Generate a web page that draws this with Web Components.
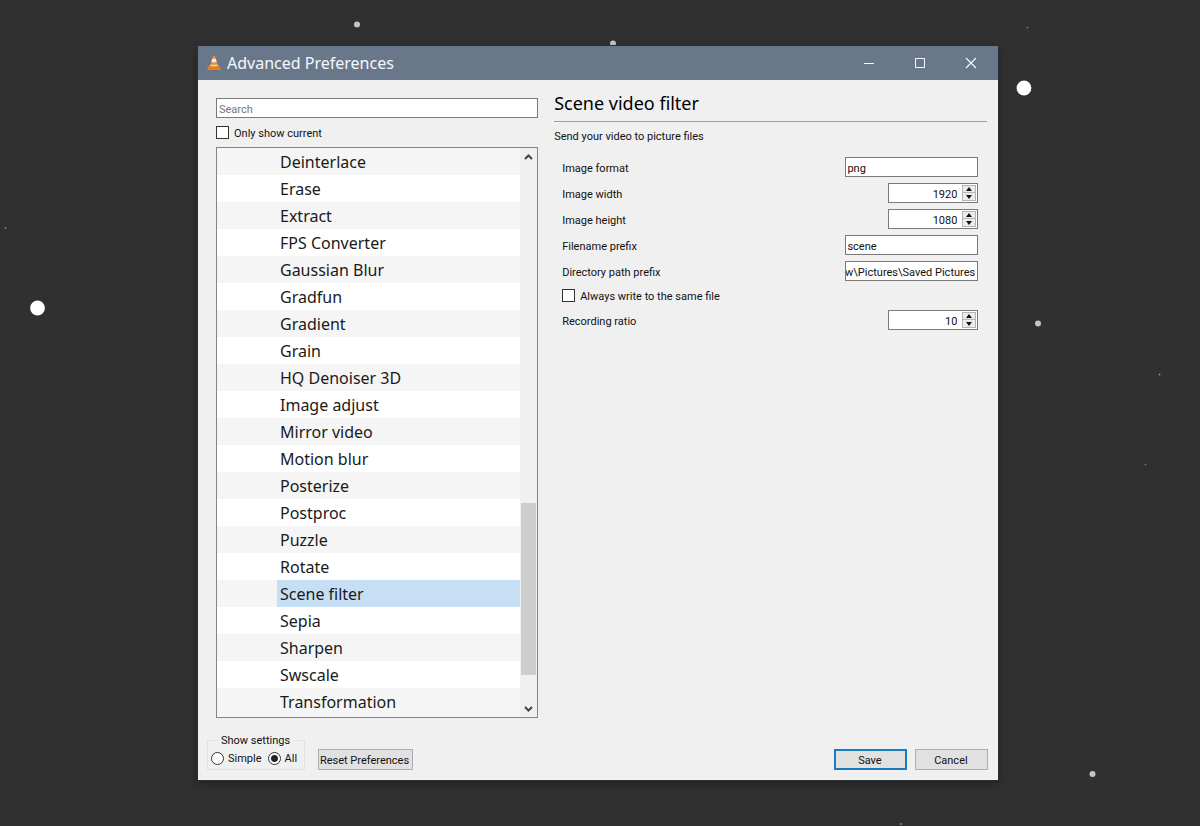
<!DOCTYPE html>
<html lang="en">
<head>
<meta charset="utf-8">
<meta name="viewport" content="width=device-width, initial-scale=1">
<title>Advanced Preferences</title>
<style>
  body { margin: 0; background: #303030; font-family: "Noto Sans", "Open Sans", sans-serif; --small: 11px Roboto, sans-serif; }
</style>
</head>
<body>
<preferences-desktop>
  <app-window heading="Advanced Preferences">
    <module-browser slot="sidebar"></module-browser>
    <settings-panel slot="content" heading="Scene video filter" summary="Send your video to picture files">
      <text-setting label="Image format" value="png"></text-setting>
      <number-setting label="Image width" value="1920"></number-setting>
      <number-setting label="Image height" value="1080"></number-setting>
      <text-setting label="Filename prefix" value="scene"></text-setting>
      <text-setting label="Directory path prefix" value="iw\Pictures\Saved Pictures" align="end"></text-setting>
      <check-box label="Always write to the same file"></check-box>
      <number-setting label="Recording ratio" value="10"></number-setting>
    </settings-panel>
    <dialog-footer slot="footer"></dialog-footer>
  </app-window>
</preferences-desktop>

<script>
const define = (name, render) => {
  customElements.define(name, class extends HTMLElement {
    constructor() {
      super();
      this.attachShadow({ mode: "open" });
    }
    connectedCallback() {
      const template = document.createElement("template");
      template.innerHTML = "<style>*{box-sizing:border-box}</style>" + render(this);
      this.shadowRoot.replaceChildren(template.content.cloneNode(true));
    }
  });
};
const attr = (el, name) => el.getAttribute(name) || "";

/* Dark desktop with scattered snow behind the dialog. */
define("preferences-desktop", () => `
  <style>
    :host { display: block; position: relative; box-sizing: border-box; min-height: 100vh; padding: 46px 0; overflow: hidden; }
    .sky { position: absolute; inset: 0; width: 100%; height: 100%; }
    ::slotted(app-window) { margin: 0 16.8% 0 16.5%; }
  </style>
  <svg class="sky" viewBox="0 0 1200 826" preserveAspectRatio="xMidYMid slice" aria-hidden="true">
    <g fill="#fff"><circle cx="1024" cy="88" r="7.4"/><circle cx="37.500" cy="308" r="7.4"/></g>
    <g fill="#c4c4c4"><circle cx="357" cy="24.500" r="3"/><circle cx="613" cy="43.500" r="3"/><circle cx="1038" cy="323.500" r="3"/><circle cx="1092.500" cy="774" r="3"/></g>
    <g fill="#8a8a8a"><circle cx="1027.500" cy="27.500" r=".8"/><circle cx="5.500" cy="228" r=".9"/><circle cx="1159.500" cy="374.500" r=".9"/><circle cx="1145.500" cy="464.500" r=".8"/><circle cx="901" cy="824" r="1"/></g>
  </svg>
  <slot></slot>`);

define("app-window", el => `
  <style>
    :host { display: block; position: relative; background: #f0f0f0; box-shadow: 0 0 0 1px #2b3036, 0 3px 8px rgba(0,0,0,.4); }
    header { display: flex; align-items: center; height: 34px; padding: 0 2px 0 9px; background: #68788a; color: #f4f8fc; }
    h1 { flex: 1; margin: 0 0 0 6px; font-size: 16px; line-height: 24px; font-weight: 400; }
    header button { display: grid; place-items: center; width: 51px; height: 34px; padding: 0; border: 0; background: none; color: inherit; }
    header svg { display: block; }
    main { display: grid; grid-template-columns: minmax(0, 322fr) minmax(0, 433fr); gap: 16px; padding: 11px 11px 0 18px; }
  </style>
  <header>
    <svg width="14" height="16" viewBox="0 0 14 16" aria-hidden="true">
      <path d="M2 10h10l2 5H0z" fill="#e8820c"/>
      <path d="M6 1h2l3 10.500q-4 2-8 0z" fill="#e98c35"/>
      <path d="M5.200 3.800h3.600l.9 3q-2.700 1.200-5.400 0z" fill="#f3eee8"/>
      <path d="M3.800 9.200q3.200 1.400 6.400 0l.3 1.200q-3.500 1.600-7 0z" fill="#eadfd5"/>
    </svg>
    <h1>${attr(el, "heading")}</h1>
    <button aria-label="Minimize"><svg width="12" height="12" fill="none" stroke="currentColor"><path d="M1 6.500h10"/></svg></button>
    <button aria-label="Maximize"><svg width="12" height="12" fill="none" stroke="currentColor"><path d="M1.500 1.500h9v9h-9z"/></svg></button>
    <button aria-label="Close"><svg width="12" height="12" fill="none" stroke="currentColor" stroke-width="1.200"><path d="M1 1l10 10M11 1L1 11"/></svg></button>
  </header>
  <main><slot name="sidebar"></slot><slot name="content"></slot></main>
  <slot name="footer"></slot>`);

define("check-box", el => `
  <style>
    :host { display: block; font: var(--small); line-height: 15px; color: #111; }
    label { display: flex; width: fit-content; align-items: center; gap: 5px; white-space: nowrap; }
    span { padding-top: 2px; }
    input { appearance: none; width: 13px; height: 13px; margin: 0; border: 1px solid #333; background: #fff; }
    input:checked { background: #333; box-shadow: inset 0 0 0 2px #fff; }
  </style>
  <label><input type="checkbox"><span>${attr(el, "label")}</span></label>`);

const modules = ["Deinterlace", "Erase", "Extract", "FPS Converter", "Gaussian Blur", "Gradfun", "Gradient", "Grain", "HQ Denoiser 3D", "Image adjust", "Mirror video", "Motion blur", "Posterize", "Postproc", "Puzzle", "Rotate", "Scene filter", "Sepia", "Sharpen", "Swscale", "Transformation"];

define("module-browser", () => `
  <style>
    :host { display: block; padding-top: 7px; }
    .search { display: block; width: 100%; height: 20px; padding: 2px 2px 0; border: 1px solid #7a7a7a; border-radius: 0; background: #fff; font: var(--small); }
    .search::placeholder { color: #777; opacity: 1; }
    check-box { margin: 6px 0; }
    .frame { display: flex; border: 1px solid #82868b; background: #f0f0f0; }
    ul { flex: 1; min-width: 0; margin: 0; padding: 0 0 2px; list-style: none; font-size: 16px; line-height: 25px; color: #1a1a1a; background: #f5f5f5; }
    li { padding-left: 60px; background: #fff; }
    li:nth-child(odd) { background: #f5f5f5; }
    li span { display: block; padding: 2px 0 0 3px; white-space: nowrap; overflow: hidden; }
    li[aria-selected="true"] span { background: #c7dff5; }
    scroll-bar { flex: none; }
  </style>
  <input class="search" type="search" placeholder="Search" aria-label="Search">
  <check-box label="Only show current"></check-box>
  <div class="frame">
    <ul role="listbox" aria-label="Modules">${modules.map(m => `<li role="option" aria-selected="${m === "Scene filter"}"><span>${m}</span></li>`).join("")}</ul>
    <scroll-bar></scroll-bar>
  </div>`);

define("scroll-bar", () => `
  <style>
    :host { display: flex; flex-direction: column; width: 17px; padding: 0 1px; background: #f0f0f0; }
    button { display: grid; place-items: center; height: 17px; padding: 0; border: 0; background: none; color: #444; }
    .track { flex: 1; display: flex; flex-direction: column; }
    .before { flex: 337; } .thumb { flex: 172; background: #cdcdcd; } .after { flex: 25; }
    svg { fill: none; stroke: currentColor; stroke-width: 2; }
  </style>
  <button aria-label="Scroll up"><svg width="9" height="6"><path d="M1 5l3.500-3.500L8 5"/></svg></button>
  <div class="track"><div class="before"></div><div class="thumb"></div><div class="after"></div></div>
  <button aria-label="Scroll down"><svg width="9" height="6"><path d="M1 1l3.500 3.500L8 1"/></svg></button>`);

define("settings-panel", el => `
  <style>
    :host { display: block; color: #111; }
    h2 { margin: 0; padding-bottom: 6px; border-bottom: 1px solid #a0a0a0; font-size: 18px; line-height: 24px; font-weight: 400; color: #000; }
    p { margin: 6px 0 12px; font: var(--small); line-height: 17px; }
    .rows { display: grid; gap: 6px; padding: 0 9px 0 8px; }
  </style>
  <h2>${attr(el, "heading")}</h2>
  <p>${attr(el, "summary")}</p>
  <div class="rows"><slot></slot></div>`);

const rowStyle = `
    :host { display: flex; align-items: center; justify-content: space-between; height: 20px; font: var(--small); color: #111; }
    label { padding-top: 2px; line-height: 17px; }
    input { border-radius: 0; color: #111; font: var(--small); }`;

define("text-setting", el => `
  <style>${rowStyle}
    input { width: 133px; height: 20px; padding: 2px 1px 0; border: 1px solid #7a7a7a; background: #fff; }
    :host([align="end"]) input { padding: 2px 2px 0 0; text-align: right; }
  </style>
  <label for="field">${attr(el, "label")}</label>
  <input id="field" type="text" value="${attr(el, "value")}">`);

define("number-setting", el => `
  <style>${rowStyle}
    .box { display: flex; width: 90px; height: 20px; padding: 1px; border: 1px solid #7a7a7a; background: #fff; }
    input { flex: 1; min-width: 0; padding: 2px 5px 0 0; border: 0; background: none; text-align: right; }
    .steps { display: grid; grid-template-rows: 1fr 1fr; width: 14px; }
    .steps button { display: grid; place-items: center; padding: 0; border: 1px solid #b4b4b4; background: #ececec; }
    .steps button + button { border-top: 0; }
    svg { display: block; fill: #111; }
  </style>
  <label for="field">${attr(el, "label")}</label>
  <div class="box">
    <input id="field" type="text" inputmode="numeric" value="${attr(el, "value")}">
    <div class="steps">
      <button aria-label="Increase"><svg width="6" height="4"><path d="M0 4l3-4 3 4z"/></svg></button>
      <button aria-label="Decrease"><svg width="6" height="4"><path d="M0 0l3 4 3-4z"/></svg></button>
    </div>
  </div>`);

define("push-button", el => `
  <style>
    :host { display: block; }
    button { display: block; width: 100%; height: 21px; padding: 2px 2px 0 0; border: 1px solid #adadad; background: #e1e1e1; color: #111; font: var(--small); white-space: nowrap; }
    :host([primary]) button { border: 2px solid #1a7cbf; }
  </style>
  <button type="button">${attr(el, "label")}</button>`);

define("dialog-footer", () => `
  <style>
    :host { display: flex; align-items: flex-end; padding: 14px 10px 10px 9px; }
    fieldset { display: flex; gap: 6px; min-width: 0; width: 98px; margin: 0 13px 0 0; padding: 1px 3px 2px; border: 1px solid #e2e2e2; font: var(--small); line-height: 17px; color: #111; }
    legend { margin-left: 7px; padding: 0 3px; white-space: nowrap; }
    label { display: flex; align-items: center; gap: 4px; }
    input { appearance: none; width: 13px; height: 13px; margin: 0; border: 1px solid #333; border-radius: 50%; background: #fff; }
    input:checked { background: radial-gradient(circle, #222 3px, #fff 4px); }
    .reset { width: 95px; margin-right: auto; }
    .action { width: 73px; margin-left: 8px; }
  </style>
  <fieldset>
    <legend>Show settings</legend>
    <label><input type="radio" name="mode">Simple</label>
    <label><input type="radio" name="mode" checked>All</label>
  </fieldset>
  <push-button class="reset" label="Reset Preferences"></push-button>
  <push-button class="action" label="Save" primary></push-button>
  <push-button class="action" label="Cancel"></push-button>`);

/* A long path shows its last folder. */
for (const row of document.querySelectorAll('text-setting[align="end"]')) {
  const field = row.shadowRoot.querySelector("input");
  field.scrollLeft = field.scrollWidth;
}
</script>
</body>
</html>
